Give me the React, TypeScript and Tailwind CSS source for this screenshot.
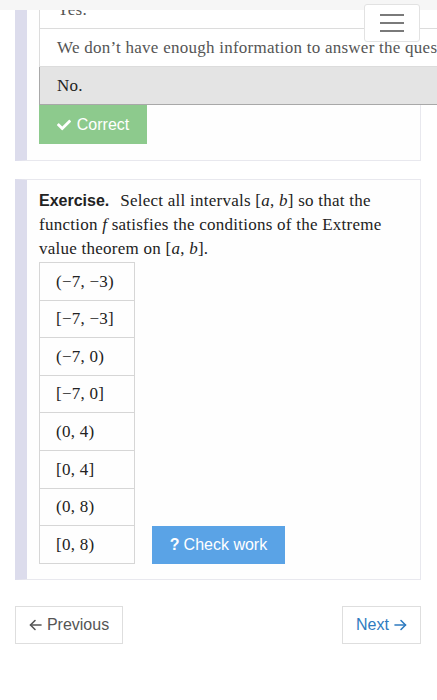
import React from 'react'
import { FaCheck } from 'react-icons/fa'

const serif = 'font-["Liberation_Serif",serif] text-[17px] tracking-[0.25px]'
const sans = 'font-["Liberation_Sans",Arial,sans-serif]'

const intervals: { l: string; a: string; b: string; r: string }[] = [
  { l: '(', a: '−7', b: '−3', r: ')' },
  { l: '[', a: '−7', b: '−3', r: ']' },
  { l: '(', a: '−7', b: '0', r: ')' },
  { l: '[', a: '−7', b: '0', r: ']' },
  { l: '(', a: '0', b: '4', r: ')' },
  { l: '[', a: '0', b: '4', r: ']' },
  { l: '(', a: '0', b: '8', r: ')' },
  { l: '[', a: '0', b: '8', r: ')' },
]

function Arrow({ dir }: { dir: 'left' | 'right' }) {
  return (
    <svg width="13" height="12" viewBox="0 0 13 12" fill="none" stroke="currentColor" strokeWidth="1.6" strokeLinecap="round" strokeLinejoin="round">
      {dir === 'left' ? (
        <>
          <path d="M12 6H1.5" />
          <path d="M6 1.5L1.5 6L6 10.5" />
        </>
      ) : (
        <>
          <path d="M1 6h10.5" />
          <path d="M7 1.5L11.5 6L7 10.5" />
        </>
      )}
    </svg>
  )
}

function Hamburger() {
  return (
    <button className="absolute right-[17px] top-[4px] z-20 flex h-[38px] w-[56px] flex-col items-center justify-center gap-[6px] rounded-[3px] border border-[#e2e2e2] bg-white">
      <span className="block h-[2px] w-[24px] bg-[#7a7a7a]" />
      <span className="block h-[2px] w-[24px] bg-[#7a7a7a]" />
      <span className="block h-[2px] w-[24px] bg-[#7a7a7a]" />
    </button>
  )
}

export default function App() {
  return (
    <div className="relative h-[700px] w-[437px] overflow-hidden bg-white text-[#333]">
      {/* Fixed header strip */}
      <div className="absolute inset-x-0 top-0 z-10 h-[10px] bg-[#f6f6f6]" />
      <Hamburger />

      <div className="flex flex-col pl-[15px] pr-[16px]">
        {/* Previous exercise card, scrolled partly out of view */}
        <div className="-mt-[40px] flex border border-l-[12px] border-[#e8e8ee] border-l-[#dcdcec] bg-[#fefefe]">
          <div className="flex flex-col pl-[12px] pt-[30px] pb-[16px]">
            <div className={`flex w-[420px] flex-col ${serif}`}>
              <div className="flex h-[38px] items-center border border-[#dcdcdc] bg-white pl-[17px] text-[#555]">Yes.</div>
              <div className="flex h-[38px] items-center whitespace-nowrap border-x border-b border-[#dcdcdc] bg-white pl-[17px] text-[#555]">
                We don’t have enough information to answer the question.
              </div>
              <div className="flex h-[38px] items-center border border-t-0 border-[#a8a8a8] bg-[#e4e4e4] pl-[17px] text-[#222]">No.</div>
            </div>
            <div className={`flex h-[39px] w-[108px] items-center justify-center gap-[6px] bg-[#8dca8d] text-[16px] text-white ${sans}`}>
              <FaCheck size={14} />
              <span>Correct</span>
            </div>
          </div>
        </div>

        {/* Exercise card */}
        <div className="mt-[18px] flex border border-l-[12px] border-[#e8e8ee] border-l-[#dcdcec] bg-[#fefefe]">
          <div className="flex flex-col pl-[12px] pr-[12px] pt-[9px] pb-[15px]">
            <p className={`leading-[24px] text-[#222] ${serif}`}>
              <span className={`text-[16px] font-bold tracking-normal ${sans}`}>Exercise.</span>
              <span className="ml-[11px]">Select all intervals </span>
              [<i>a</i>, <i>b</i>] so that the function <i>f</i> satisfies the conditions of the Extreme value theorem on [<i>a</i>, <i>b</i>].
            </p>
            <div className="mt-[1px] flex items-end gap-[17px]">
              <div className={`flex w-[96px] flex-col border-l border-r border-t border-[#d6d6d6] text-[#222] ${serif}`}>
                {intervals.map((iv, i) => (
                  <div key={i} className="flex h-[37.6px] items-center border-b border-[#d6d6d6] pl-[16px]">
                    {iv.l}{iv.a},&nbsp;{iv.b}{iv.r}
                  </div>
                ))}
              </div>
              <button className={`flex h-[38px] w-[133px] items-center justify-center gap-[4px] bg-[#5aa3e6] text-[16px] text-white ${sans}`}>
                <span className="font-bold">?</span>
                <span>Check work</span>
              </button>
            </div>
          </div>
        </div>

        {/* Pager */}
        <div className={`mt-[26px] flex justify-between text-[16px] ${sans}`}>
          <button className="flex h-[38px] w-[108px] items-center justify-center gap-[5px] border border-[#dedede] bg-white text-[#555]">
            <Arrow dir="left" />
            <span>Previous</span>
          </button>
          <button className="flex h-[38px] w-[79px] items-center justify-center gap-[5px] border border-[#dedede] bg-white text-[#2f7bc0]">
            <span>Next</span>
            <Arrow dir="right" />
          </button>
        </div>
      </div>
    </div>
  )
}
